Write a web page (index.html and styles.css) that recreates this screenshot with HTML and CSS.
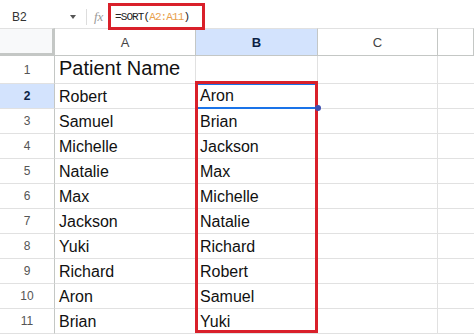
FILE: index.html
```html
<!DOCTYPE html>
<html lang="en">
<head>
    <meta charset="UTF-8">
    <meta name="viewport" content="width=device-width, initial-scale=1.0">
    <title>SORT - Patient Names</title>
    <link rel="stylesheet" href="styles.css">
</head>
<body>

<div class="toolbar">
    <div class="namebox">
        <span>B2</span>
        <span class="caret"></span>
    </div>
    <div class="sep"></div>
    <span class="fx">fx</span>
    <div class="formula">=SORT(<span class="ref">A2:A11</span>)</div>
</div>

<div class="sheet">
    <div class="corner"></div>
    <div class="colhead">A</div>
    <div class="colhead active">B</div>
    <div class="colhead">C</div>
    <div class="colhead last"></div>

    <div class="rowhead">1</div>
    <div class="cell title">Patient Name</div>
    <div class="cell"></div>
    <div class="cell"></div>
    <div class="cell last"></div>

    <div class="rowhead active">2</div>
    <div class="cell">Robert</div>
    <div class="cell selected">Aron</div>
    <div class="cell"></div>
    <div class="cell last"></div>

    <div class="rowhead">3</div>
    <div class="cell">Samuel</div>
    <div class="cell">Brian</div>
    <div class="cell"></div>
    <div class="cell last"></div>

    <div class="rowhead">4</div>
    <div class="cell">Michelle</div>
    <div class="cell">Jackson</div>
    <div class="cell"></div>
    <div class="cell last"></div>

    <div class="rowhead">5</div>
    <div class="cell">Natalie</div>
    <div class="cell">Max</div>
    <div class="cell"></div>
    <div class="cell last"></div>

    <div class="rowhead">6</div>
    <div class="cell">Max</div>
    <div class="cell">Michelle</div>
    <div class="cell"></div>
    <div class="cell last"></div>

    <div class="rowhead">7</div>
    <div class="cell">Jackson</div>
    <div class="cell">Natalie</div>
    <div class="cell"></div>
    <div class="cell last"></div>

    <div class="rowhead">8</div>
    <div class="cell">Yuki</div>
    <div class="cell">Richard</div>
    <div class="cell"></div>
    <div class="cell last"></div>

    <div class="rowhead">9</div>
    <div class="cell">Richard</div>
    <div class="cell">Robert</div>
    <div class="cell"></div>
    <div class="cell last"></div>

    <div class="rowhead">10</div>
    <div class="cell">Aron</div>
    <div class="cell">Samuel</div>
    <div class="cell"></div>
    <div class="cell last"></div>

    <div class="rowhead">11</div>
    <div class="cell">Brian</div>
    <div class="cell">Yuki</div>
    <div class="cell"></div>
    <div class="cell last"></div>

    <div class="highlight"></div>
</div>

</body>
</html>
```

FILE: styles.css
```css
body {
    margin: 0;
    background-color: #fff;
    font-family: "Liberation Sans", Arial, sans-serif;
    color: #111;
    overflow: hidden;
}
.toolbar {
    position: relative;
    z-index: 3;
    height: 22px;
    padding-top: 6px;
    display: flex;
    align-items: center;
    background-color: #fff;
}
.namebox {
    width: 64px;
    padding-left: 12px;
    display: flex;
    align-items: center;
    justify-content: space-between;
    font-size: 12px;
    color: #333;
}
.caret {
    width: 0;
    height: 0;
    border-left: 3px solid transparent;
    border-right: 3px solid transparent;
    border-top: 4px solid #555;
}
.sep {
    width: 1px;
    height: 16px;
    background-color: #ddd;
    margin-left: 10px;
}
.fx {
    font-family: "Liberation Serif", serif;
    font-style: italic;
    font-size: 13px;
    color: #999;
    margin-left: 7px;
    width: 12px;
}
.formula {
    align-self: flex-start;
    margin-top: -3px;
    margin-left: 2px;
    height: 21px;
    width: 87px;
    border: 3px solid #d9202a;
    display: flex;
    align-items: center;
    padding-left: 4px;
    font-family: "Liberation Mono", monospace;
    font-size: 11px;
    letter-spacing: -0.9px;
    color: #222;
    background-color: #fff;
    box-sizing: content-box;
}
.ref {
    color: #e8a04c;
}
.sheet {
    position: relative;
    display: grid;
    grid-template-columns: 55px 141px 122px 120px 1fr;
    grid-template-rows: 28px 28px repeat(10, 25px);
}
.corner {
    background-color: #f8f9fa;
    border-right: 3px solid #c4c7c5;
    border-bottom: 3px solid #c4c7c5;
    border-top: 1px solid #e1e1e1;
}
.colhead {
    display: flex;
    align-items: center;
    justify-content: center;
    font-size: 13px;
    color: #444;
    border-right: 1px solid #c4c7c5;
    border-bottom: 1px solid #c4c7c5;
    border-top: 1px solid #e1e1e1;
}
.colhead.active {
    background-color: #d3e3fd;
    color: #0b1f44;
    font-weight: bold;
}
.rowhead {
    display: flex;
    align-items: center;
    justify-content: center;
    font-size: 12px;
    color: #555;
    border-right: 1px solid #c4c7c5;
    border-bottom: 1px solid #e1e1e1;
}
.rowhead.active {
    background-color: #d3e3fd;
    color: #0b1f44;
    font-weight: bold;
}
.cell {
    display: flex;
    align-items: flex-end;
    padding: 0 0 2px 4px;
    font-size: 16px;
    border-right: 1px solid #e1e1e1;
    border-bottom: 1px solid #e1e1e1;
    white-space: nowrap;
}
.cell.last {
    border-right: none;
}
.cell.title {
    font-size: 20px;
    padding-bottom: 3px;
}
.cell.selected {
    margin-top: -1px;
    border-top: 2px solid #1a73e8;
    border-bottom: 2px solid #1a73e8;
    position: relative;
}
.cell.selected::after {
    content: "";
    position: absolute;
    right: -4px;
    bottom: -4px;
    width: 6px;
    height: 6px;
    border-radius: 50%;
    background-color: #3c4fb0;
    z-index: 2;
}
/* red outline over the sorted range B2:B11 */
.highlight {
    position: absolute;
    top: 53px;
    left: 195px;
    width: 123px;
    height: 252px;
    box-sizing: border-box;
    border: 3px solid #d9202a;
    pointer-events: none;
}
```
